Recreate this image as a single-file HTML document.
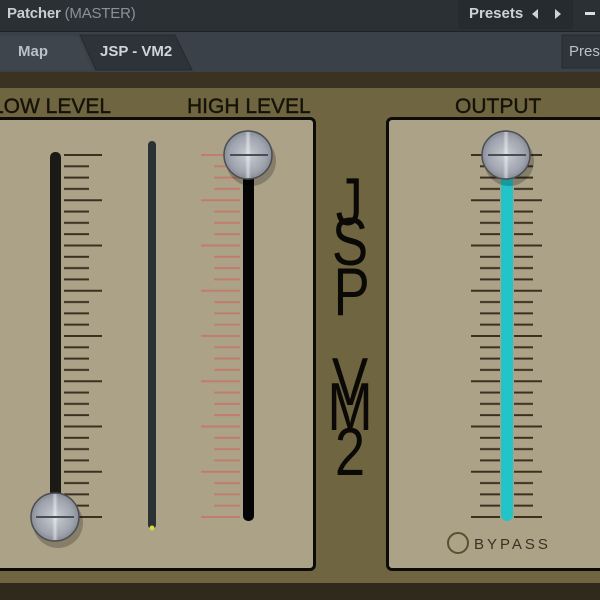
<!DOCTYPE html>
<html><head><meta charset="utf-8"><style>
html,body{margin:0;padding:0}
body{width:600px;height:600px;overflow:hidden;position:relative;background:#6f6540;font-family:"Liberation Sans",sans-serif}
.abs{position:absolute}
</style></head><body>
<div class="abs" style="left:0;top:0;width:600px;height:31px;background:#2b3035;border-bottom:1px solid #1d2125"></div>
<div class="abs" style="left:7px;top:5px;font-size:15px;color:#c9ced3;font-weight:bold;letter-spacing:-0.2px">Patcher <span style="color:#8a9198;font-weight:normal">(MASTER)</span></div>
<div class="abs" style="left:458px;top:0;width:115px;height:29px;background:#262b30"></div>
<div class="abs" style="left:469px;top:5px;font-size:15px;color:#cdd2d7;font-weight:bold">Presets</div>
<svg class="abs" style="left:528px;top:6px" width="40" height="16"><path d="M10 3 L4 8 L10 13Z" fill="#cdd2d7"/><path d="M27 3 L33 8 L27 13Z" fill="#cdd2d7"/></svg>
<div class="abs" style="left:585px;top:12px;width:10px;height:3px;background:#ddd"></div>
<div class="abs" style="left:0;top:32px;width:600px;height:40px;background:#3a4148"></div>
<svg class="abs" style="left:0;top:32px" width="600" height="40">
<path d="M0 4 L78 4 L92 38 L0 38Z" fill="#3e454c"/>
<path d="M80 3 L175 3 L192 38 L96 38Z" fill="#2d3339" stroke="#252a2f"/>
<rect x="562" y="3" width="40" height="33" fill="#2f353b" stroke="#252a2f"/>
</svg>
<div class="abs" style="left:18px;top:43px;font-size:15px;color:#b9c0c7;font-weight:bold">Map</div>
<div class="abs" style="left:100px;top:43px;font-size:15px;color:#d0d5da;font-weight:bold">JSP - VM2</div>
<div class="abs" style="left:569px;top:43px;font-size:15px;color:#b9c0c7">Prese</div>
<div class="abs" style="left:0;top:72px;width:600px;height:16px;background:#3b3322"></div>
<div class="abs" style="left:0;top:583px;width:600px;height:17px;background:#2f2a1c"></div>
<div class="abs" style="left:-8px;top:95px;font-size:21px;color:#151208;-webkit-text-stroke:0.4px #151208">LOW LEVEL</div>
<div class="abs" style="left:187px;top:95px;font-size:21px;color:#151208;-webkit-text-stroke:0.4px #151208">HIGH LEVEL</div>
<div class="abs" style="left:455px;top:95px;font-size:21px;color:#151208;-webkit-text-stroke:0.4px #151208">OUTPUT</div>
<div class="abs" style="left:-10px;top:117px;width:320px;height:448px;background:#aca287;border:3px solid #0c0b08;border-radius:6px"></div>
<div class="abs" style="left:386px;top:117px;width:230px;height:448px;background:#aca287;border:3px solid #0c0b08;border-radius:6px"></div>
<svg class="abs" style="left:0;top:0" width="600" height="600">
<defs>
<pattern id="pL" patternUnits="userSpaceOnUse" x="0" y="154" width="600" height="45.25">
<rect x="64" y="0" width="38" height="2" fill="#3b3020"/><rect x="64" y="11.3" width="25" height="2" fill="#3b3020"/><rect x="64" y="22.6" width="25" height="2" fill="#3b3020"/><rect x="64" y="33.9" width="25" height="2" fill="#3b3020"/>
<rect x="201" y="0" width="39" height="2" fill="#c07d6c"/><rect x="214" y="11.3" width="26" height="2" fill="#c07d6c"/><rect x="214" y="22.6" width="26" height="2" fill="#c07d6c"/><rect x="214" y="33.9" width="26" height="2" fill="#c07d6c"/>
<rect x="471" y="0" width="29" height="2" fill="#3b3020"/><rect x="480" y="11.3" width="20" height="2" fill="#3b3020"/><rect x="480" y="22.6" width="20" height="2" fill="#3b3020"/><rect x="480" y="33.9" width="20" height="2" fill="#3b3020"/>
<rect x="514" y="0" width="28" height="2" fill="#3b3020"/><rect x="514" y="11.3" width="19" height="2" fill="#3b3020"/><rect x="514" y="22.6" width="19" height="2" fill="#3b3020"/><rect x="514" y="33.9" width="19" height="2" fill="#3b3020"/>
</pattern>
<radialGradient id="kn" cx="0.5" cy="0.5" r="0.55"><stop offset="0" stop-color="#c8ccd4"/><stop offset="0.7" stop-color="#9ea3ad"/><stop offset="1" stop-color="#7c818a"/></radialGradient>
<linearGradient id="kh" x1="0" x2="1"><stop offset="0" stop-color="#fff" stop-opacity="0"/><stop offset="0.5" stop-color="#fff" stop-opacity="0.5"/><stop offset="1" stop-color="#fff" stop-opacity="0"/></linearGradient>
</defs>
<rect x="0" y="150" width="600" height="370" fill="url(#pL)"/>
<rect x="50" y="152" width="11" height="365" rx="5" fill="#1c1a16"/>
<rect x="148" y="141" width="8" height="388" rx="4" fill="#2c3234"/>
<circle cx="152" cy="528" r="2.5" fill="#d8d840"/>
<rect x="243" y="155" width="11" height="366" rx="5" fill="#050505"/>
<rect x="501" y="155" width="12" height="366" rx="6" fill="#22c4c8"/>
<g>
<circle cx="58" cy="523" r="25" fill="#000" opacity="0.22"/>
<circle cx="55" cy="517" r="24" fill="url(#kn)" stroke="#4a4d52" stroke-width="1.5"/>
<rect x="52" y="494" width="6" height="46" fill="url(#kh)"/>
<rect x="36" y="516" width="38" height="2" fill="#4a4e56"/>
</g>
<g>
<circle cx="251" cy="161" r="25" fill="#000" opacity="0.22"/>
<circle cx="248" cy="155" r="24" fill="url(#kn)" stroke="#4a4d52" stroke-width="1.5"/>
<rect x="245" y="132" width="6" height="46" fill="url(#kh)"/>
<rect x="230" y="154" width="38" height="2" fill="#4a4e56"/>
</g>
<g>
<circle cx="509" cy="161" r="25" fill="#000" opacity="0.22"/>
<circle cx="506" cy="155" r="24" fill="url(#kn)" stroke="#4a4d52" stroke-width="1.5"/>
<rect x="503" y="132" width="6" height="46" fill="url(#kh)"/>
<rect x="488" y="154" width="38" height="2" fill="#4a4e56"/>
</g>
<circle cx="458" cy="543" r="10" fill="none" stroke="#5a4f30" stroke-width="2"/>
<text x="474" y="549" font-family="Liberation Sans" font-size="15" letter-spacing="3" fill="#3a3222">BYPASS</text>
<g font-family="Liberation Sans" font-size="68" fill="#0a0906" text-anchor="middle" transform="translate(350 0) scale(0.8 1) translate(-350 0)">
<text x="349" y="225">J</text>
<text x="350" y="265">S</text>
<text x="352" y="315">P</text>
<text x="350" y="405">V</text>
<text x="350" y="430">M</text>
<text x="350" y="475">2</text>
</g>
</svg>
</body></html>
